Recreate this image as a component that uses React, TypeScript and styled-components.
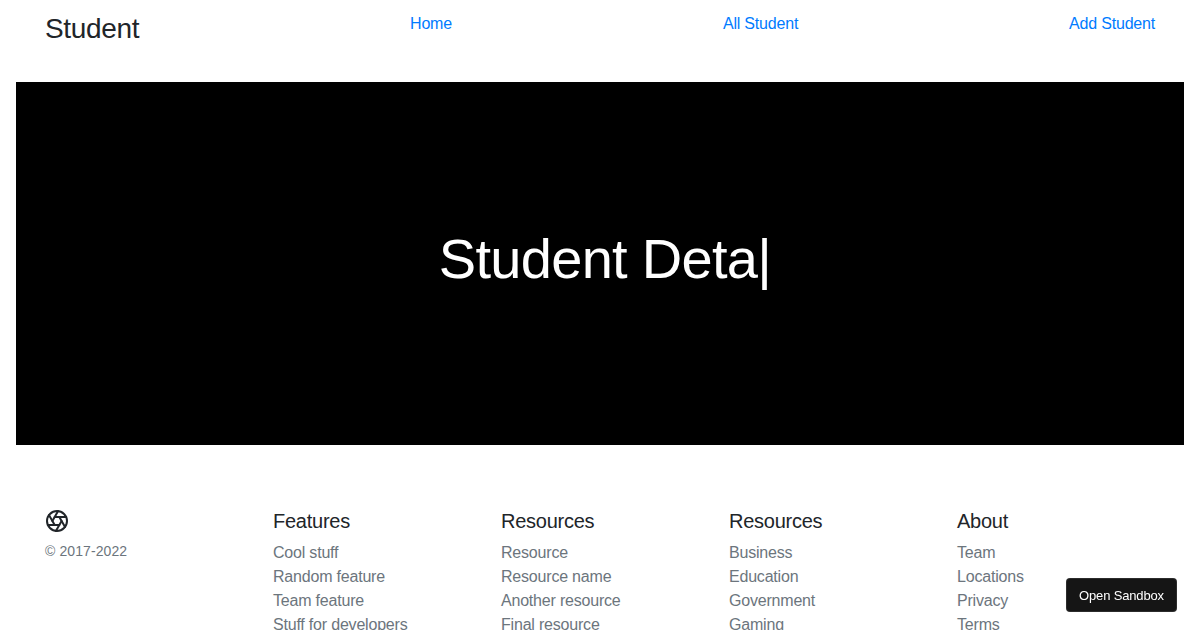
import styled, { createGlobalStyle } from 'styled-components'
import { Aperture } from 'lucide-react'

const GlobalStyle = createGlobalStyle`
  html, body {
    margin: 0;
    height: 630px;
    overflow: hidden;
    background: #fff;
    font-family: "Liberation Sans", Arial, sans-serif;
    font-size: 16px;
    line-height: 1.5;
    color: #212529;
  }
  * {
    letter-spacing: -0.0125em;
  }
`

const columns = [
  { title: 'Features', links: ['Cool stuff', 'Random feature', 'Team feature', 'Stuff for developers'] },
  { title: 'Resources', links: ['Resource', 'Resource name', 'Another resource', 'Final resource'] },
  { title: 'Resources', links: ['Business', 'Education', 'Government', 'Gaming'] },
  { title: 'About', links: ['Team', 'Locations', 'Privacy', 'Terms'] },
]

export default function App() {
  return (
    <>
      <GlobalStyle />
      <Navbar>
        <Brand>Student</Brand>
        <NavLink href="#">Home</NavLink>
        <NavLink href="#">All Student</NavLink>
        <NavLink href="#">Add Student</NavLink>
      </Navbar>
      <Hero>
        <HeroTitle>Student Deta<Cursor>|</Cursor></HeroTitle>
      </Hero>
      <Footer>
        <FooterCol>
          <Logo><Aperture size={24} strokeWidth={2} /></Logo>
          <Copyright>© 2017-2022</Copyright>
        </FooterCol>
        {columns.map((col, i) => (
          <FooterCol key={i}>
            <ColTitle>{col.title}</ColTitle>
            <LinkList>
              {col.links.map((link) => (
                <li key={link}><FooterLink href="#">{link}</FooterLink></li>
              ))}
            </LinkList>
          </FooterCol>
        ))}
      </Footer>
      <SandboxButton>Open Sandbox</SandboxButton>
    </>
  )
}

const Navbar = styled.nav`
  display: flex;
  justify-content: space-between;
  align-items: flex-start;
  height: 82px;
  padding: 0 45px;
  box-sizing: border-box;
`

const Brand = styled.div`
  font-size: 28px;
  line-height: 42px;
  margin-top: 8px;
`

const NavLink = styled.a`
  color: #007bff;
  text-decoration: none;
  margin-top: 12px;
`

const Hero = styled.section`
  display: flex;
  align-items: center;
  justify-content: center;
  height: 363px;
  padding: 0 0 9px 10px;
  box-sizing: border-box;
  margin: 0 16px;
  background: #000;
`

const HeroTitle = styled.h1`
  margin: 0;
  font-size: 56px;
  font-weight: 400;
  line-height: 1.2;
  color: #fff;
`

const Cursor = styled.span`
  font-weight: 400;
`

const Footer = styled.footer`
  display: grid;
  grid-template-columns: repeat(5, 228px);
  width: 1140px;
  margin: 0 auto;
  padding-top: 64px;
`

const FooterCol = styled.div`
  padding: 0 15px;
`

const Logo = styled.div`
  display: block;
  height: 24px;
  margin-bottom: 8px;
  color: #212529;
`

const Copyright = styled.small`
  display: block;
  font-size: 14px;
  line-height: 21px;
  letter-spacing: 0.1px;
  color: #6c757d;
`

const ColTitle = styled.h5`
  margin: 0 0 8px;
  font-size: 20px;
  font-weight: 500;
  line-height: 1.2;
`

const LinkList = styled.ul`
  list-style: none;
  margin: 0;
  padding: 0;
`

const FooterLink = styled.a`
  color: #6c757d;
  text-decoration: none;
`

const SandboxButton = styled.button`
  position: fixed;
  right: 23px;
  bottom: 18px;
  width: 111px;
  height: 34px;
  padding: 0;
  border: 1px solid rgba(255, 255, 255, 0.1);
  border-radius: 4px;
  background: #151515;
  color: #fff;
  font-family: "Liberation Sans", Arial, sans-serif;
  font-size: 13px;
`
